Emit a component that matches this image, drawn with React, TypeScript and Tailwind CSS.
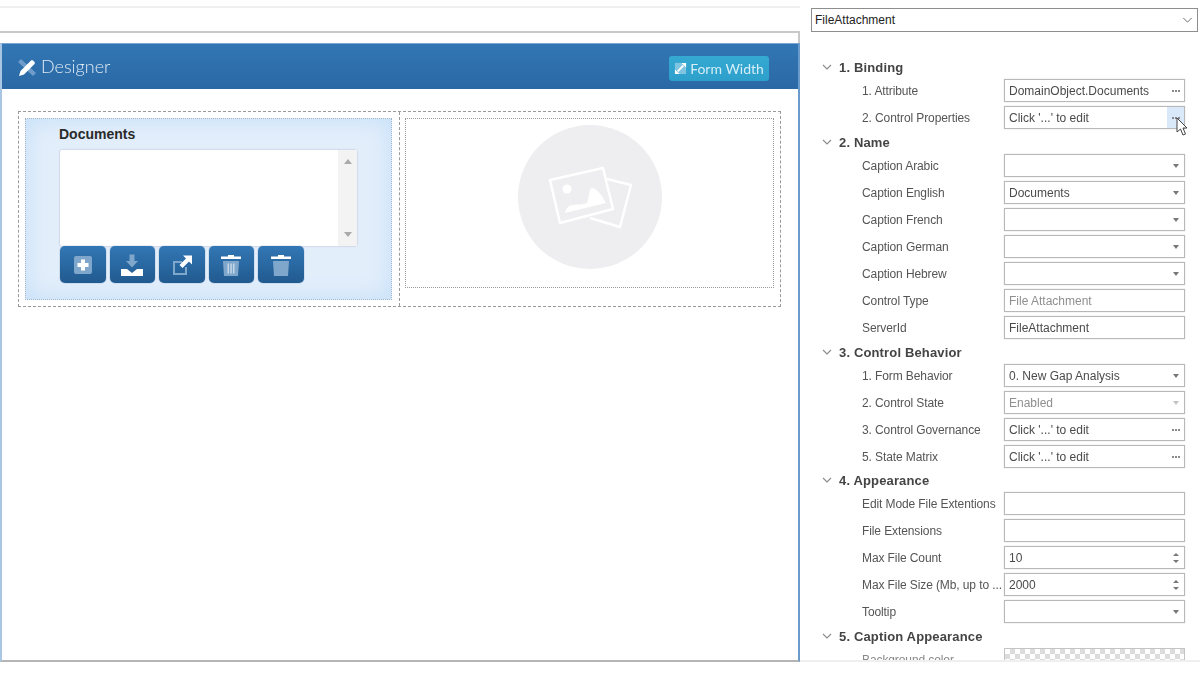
import React from "react";

type Kind = "none" | "dots" | "drop" | "spin";

interface RowProps {
  label: string;
  value?: string;
  kind?: Kind;
  muted?: boolean;
  hot?: boolean;
}

const Row: React.FC<RowProps> = ({ label, value = "", kind = "none", muted, hot }) => (
  <div className="flex h-[27px] items-center">
    <div className="w-[189px] shrink-0 pl-[47px] tracking-[-0.1px] text-[#555] whitespace-nowrap">{label}</div>
    <div className="flex h-[23px] w-[181px] items-center justify-between border border-[#b8b8b8] bg-white shadow-[0_0_1px_#c8c8c8]">
      <span className={`pl-[4px] whitespace-nowrap ${muted ? "text-[#8f8f8f]" : "text-[#4a4a4a]"}`}>{value}</span>
      {kind === "dots" && (
        <span className={`flex h-full w-[17px] items-center justify-center ${hot ? "bg-[#d9e9f9]" : ""}`}>
          <span className="flex gap-[1px]">
            <i className="size-[2px] bg-[#8a8a8a]" />
            <i className="size-[2px] bg-[#8a8a8a]" />
            <i className="size-[2px] bg-[#8a8a8a]" />
          </span>
        </span>
      )}
      {kind === "drop" && (
        <span className={`mr-[5px] h-0 w-0 border-x-[3.5px] border-t-[4px] border-x-transparent ${muted ? "border-t-[#c4c4c4]" : "border-t-[#777]"}`} />
      )}
      {kind === "spin" && (
        <span className="mr-[5px] flex flex-col gap-[4px]">
          <i className="block h-0 w-0 border-x-[3px] border-b-[3px] border-x-transparent border-b-[#777]" />
          <i className="block h-0 w-0 border-x-[3px] border-t-[3px] border-x-transparent border-t-[#777]" />
        </span>
      )}
    </div>
  </div>
);

const Group: React.FC<{ title: string; tall?: boolean; children: React.ReactNode }> = ({ title, tall, children }) => (
  <div>
    <div className={`flex items-center ${tall ? "h-[21px]" : "h-[20px]"}`}>
      <svg viewBox="0 0 10 6" className="ml-[7px] h-[6px] w-[10px]" fill="none" stroke="#8a8a8a" strokeWidth="1.1">
        <path d="M1 1l4 4 4-4" />
      </svg>
      <span className="ml-[7px] mt-[2px] text-[13px] font-bold tracking-[0.15px] text-[#444] whitespace-nowrap">{title}</span>
    </div>
    {children}
  </div>
);

const ToolButton: React.FC<{ children: React.ReactNode }> = ({ children }) => (
  <button className="flex h-[37px] w-[45.5px] items-center justify-center rounded-[5px] bg-gradient-to-b from-[#3277b5] to-[#215a8f] shadow-[0_0_1px_#1d4f80]">
    <svg viewBox="0 0 24 24" className="size-[24px]">
      {children}
    </svg>
  </button>
);

export default function App() {
  return (
    <div className="relative flex h-[688px] w-[1200px] overflow-hidden bg-white font-['Liberation_Sans',sans-serif] text-[12px]">
      {/* left side */}
      <div className="flex h-[662px] w-[800px] shrink-0 flex-col">
        <div className="mt-[6px] h-[2px] bg-[#efefef]" />
        <div className="mt-[23px] h-[2px] bg-[#c9c9c9]" />
        <div className="h-[10px] border-r-2 border-[#c9c9c9]" />
        <div className="flex min-h-0 flex-1 flex-col border-x-2 border-b-2 border-t border-t-[#7aa5d0] border-r-[#6b9bcb] border-l-[#a9c7e3] border-b-[#b5b5b5]">
          <div className="flex h-[45px] shrink-0 items-center justify-between bg-gradient-to-b from-[#3277b5] to-[#2a68a4] pl-[15px] pr-[29px]">
            <div className="flex items-center gap-[4px] blur-[0.3px]">
              <svg viewBox="0 0 20 20" className="size-[20px]">
                <path d="M1 5l3-3 15 14-3 3z" fill="#6f9ccb" />
                <path d="M2 19l1.500-5L14 3.500a1.500 1.500 0 012 0l1.500 1.500a1.500 1.500 0 010 2L7 17.500z" fill="#fff" />
              </svg>
              <span className="font-['Lato',sans-serif] text-[18px] font-light text-[#dfeaf5]">Designer</span>
            </div>
            <button className="mt-[4px] flex h-[25px] w-[100px] items-center justify-center gap-[3px] rounded-[3px] bg-gradient-to-b from-[#35a9d2] to-[#2d9fcb] text-[14px] text-[#d5eef7] blur-[0.3px]">
              <svg viewBox="0 0 14 14" className="size-[13px]">
                <rect x="1" y="1" width="12" height="12" fill="#7fc4e0" />
                <path d="M8 1h5v5zM1 13V8l5 5z" fill="#fff" />
                <path d="M4 10l6-6" stroke="#fff" strokeWidth="2" />
              </svg>
              <span className="font-['Lato',sans-serif]">Form Width</span>
            </button>
          </div>
          <div className="flex-1 bg-white pl-[16px] pt-[22px]">
            <div className="flex h-[196px] w-[763px] border border-dashed border-[#9a9a9a]">
              <div className="h-full w-[381px] border-r border-dashed border-[#9a9a9a] p-[6px]">
                <div className="flex h-[182px] w-[367px] flex-col border border-dotted border-[#9fb4c8] bg-[#e3eefb] pl-[34px] shadow-[inset_0_0_24px_#c3dff8]">
                  <span className="-ml-[1px] mt-[5px] h-[26px] text-[14px] font-bold leading-[20px] text-[#2a2a2a]">Documents</span>
                  <div className="flex h-[96px] w-[297px] shrink-0 justify-end rounded-[2px] bg-white shadow-[0_0_2px_#aab]">
                    <div className="flex w-[19px] flex-col items-center justify-between bg-[#f3f3f3] py-[9px]">
                      <i className="block h-0 w-0 border-x-[4px] border-b-[5px] border-x-transparent border-b-[#aaa]" />
                      <i className="block h-0 w-0 border-x-[4px] border-t-[5px] border-x-transparent border-t-[#aaa]" />
                    </div>
                  </div>
                  <div className="flex gap-[4px]">
                    <ToolButton>
                      <rect x="3" y="3" width="18" height="18" rx="2" fill="#7fa6cb" />
                      <path d="M10 6.500h4V10h3.500v4H14v3.500h-4V14H6.500v-4H10z" fill="#fff" />
                    </ToolButton>
                    <ToolButton>
                      <path d="M9.500 1.500h5V8H18l-6 6.500L6 8h3.500z" fill="#7fa6cb" />
                      <path d="M1 16h6l5 4 5-4h6v7H1z" fill="#fff" />
                    </ToolButton>
                    <ToolButton>
                      <path d="M3 8h9v2H5v10h10v-6h2v8H3z" fill="#7fa6cb" />
                      <path d="M13 2.500h9v9l-3-3-6.500 6.500-3-3L16 5.500z" fill="#fff" />
                    </ToolButton>
                    <ToolButton>
                      <path d="M9 2h6v1.500h7V6H2V3.500h7z" fill="#fff" />
                      <path d="M4 8h16l-1 15H5z" fill="#7fa6cb" />
                      <path d="M8.500 10.500H10v10H8.500zM11.300 10.500h1.500v10h-1.500zM14 10.500h1.500v10H14z" fill="#c5d7e8" />
                    </ToolButton>
                    <ToolButton>
                      <path d="M9 2h6v1.500h7V6H2V3.500h7z" fill="#fff" />
                      <path d="M4 8h16l-1 15H5z" fill="#7fa6cb" />
                    </ToolButton>
                  </div>
                </div>
              </div>
              <div className="h-full flex-1 py-[6px] pl-[5px] pr-[5px]">
                <div className="flex h-[170px] w-[369px] items-center justify-center border border-dotted border-[#9a9a9a] pb-[12px]">
                  <div className="flex size-[144px] items-center justify-center rounded-full bg-[#eeedef]">
                    <svg viewBox="0 0 90 65" className="h-[65px] w-[90px]" fill="none" stroke="#fff" strokeWidth="2.500" strokeLinejoin="round">
                      <path d="M62 14l24 6-11 42-30-9" />
                      <path d="M5 15L58 3l10 41-53 14z" fill="#eeedef" />
                      <circle cx="22" cy="24" r="4.500" fill="#fff" stroke="none" />
                      <path d="M20 48c1-5 4-8 8-8 5-1 10 0 14-2 2-5 2-15 5-15 5 0 11 9 14 15z" fill="#fff" stroke="none" />
                    </svg>
                  </div>
                </div>
              </div>
            </div>
          </div>
        </div>
      </div>

      {/* right side */}
      <div className="flex h-[662px] flex-1 flex-col border-b-2 border-[#efefef]">
        <div className="ml-[11px] mt-[8px] flex h-[24px] w-[387px] shrink-0 items-center justify-between border border-[#8e8e8e] pl-[3px] pr-[4px] text-[#222]">
          <span>FileAttachment</span>
          <svg viewBox="0 0 12 7" className="h-[6px] w-[11px]" fill="none" stroke="#666" strokeWidth="1.100">
            <path d="M1 1l5 5 5-5" />
          </svg>
        </div>
        <div className="mt-[25px] min-h-0 flex-1 overflow-hidden pl-[15px] blur-[0.25px]">
          <Group title="1. Binding">
            <Row label="1. Attribute" value="DomainObject.Documents" kind="dots" />
            <Row label="2. Control Properties" value="Click '...' to edit" kind="dots" hot />
          </Group>
          <Group title="2. Name" tall>
            <Row label="Caption Arabic" kind="drop" />
            <Row label="Caption English" value="Documents" kind="drop" />
            <Row label="Caption French" kind="drop" />
            <Row label="Caption German" kind="drop" />
            <Row label="Caption Hebrew" kind="drop" />
            <Row label="Control Type" value="File Attachment" muted />
            <Row label="ServerId" value="FileAttachment" />
          </Group>
          <Group title="3. Control Behavior" tall>
            <Row label="1. Form Behavior" value="0. New Gap Analysis" kind="drop" />
            <Row label="2. Control State" value="Enabled" kind="drop" muted />
            <Row label="3. Control Governance" value="Click '...' to edit" kind="dots" />
            <Row label="5. State Matrix" value="Click '...' to edit" kind="dots" />
          </Group>
          <Group title="4. Appearance">
            <Row label="Edit Mode File Extentions" />
            <Row label="File Extensions" />
            <Row label="Max File Count" value="10" kind="spin" />
            <Row label="Max File Size (Mb, up to ..." value="2000" kind="spin" />
            <Row label="Tooltip" kind="drop" />
          </Group>
          <Group title="5. Caption Appearance" tall>
            <div className="flex h-[27px] items-center">
              <div className="w-[189px] shrink-0 pl-[47px] tracking-[-0.1px] text-[#888] whitespace-nowrap">Background color</div>
              <div className="h-[23px] w-[181px] border border-[#c4c4c4] bg-[repeating-conic-gradient(#dcdcdc_0_25%,#fff_0_50%)] bg-[length:10px_10px]" />
            </div>
          </Group>
        </div>
      </div>

      {/* mouse pointer */}
      <svg viewBox="0 0 12 19" className="absolute left-[1176px] top-[117px] h-[19px] w-[12px]">
        <path d="M1 1v14l3.500-3 2.500 6 2.500-1-2.500-6H11z" fill="#fff" stroke="#444" strokeWidth="1" />
      </svg>
    </div>
  );
}
